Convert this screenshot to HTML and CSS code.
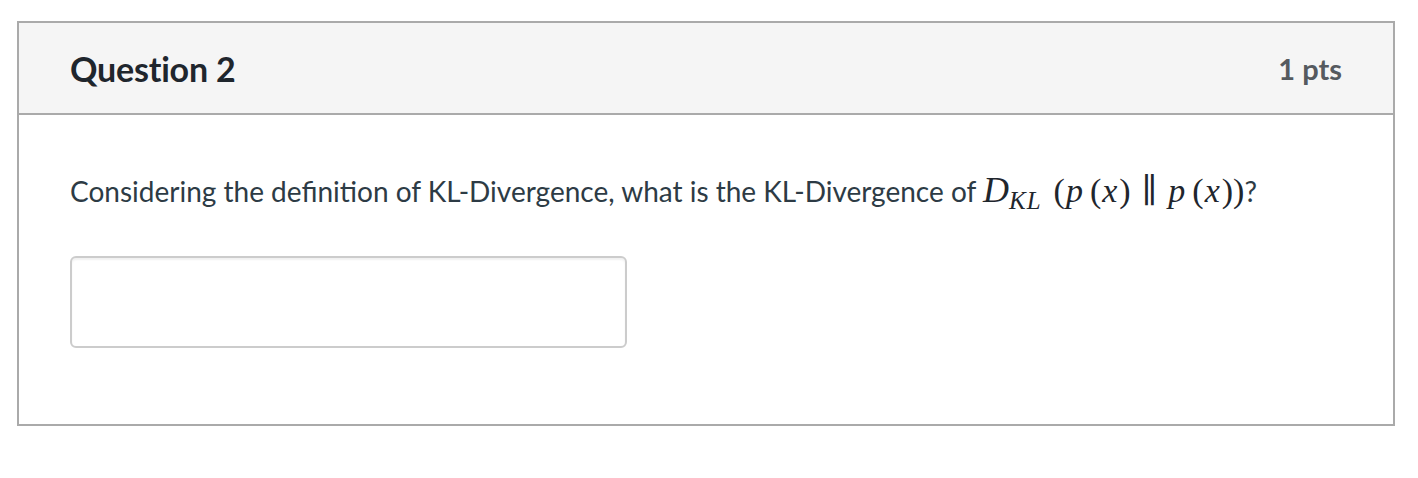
FILE: index.html
```html
<!DOCTYPE html>
<html>
<head>
<meta charset="utf-8">
<link rel="stylesheet" href="styles.css">
</head>
<body>
<div class="question">
  <div class="header">
    <span class="name">Question 2</span>
    <span class="pts">1 pts</span>
  </div>
  <div class="content">
    <p class="text">Considering the definition of KL-Divergence, what is the KL-Divergence of <span class="math"><span class="mi big">D</span><sub class="mi sub">KL</sub><span class="sp"></span><span class="mo">(</span><span class="mi">p</span><span class="sp2"></span><span class="mo">(</span><span class="mi">x</span><span class="mo">)</span><span class="sp"></span><span class="mo">∥</span><span class="sp"></span><span class="mi">p</span><span class="sp2"></span><span class="mo">(</span><span class="mi">x</span><span class="mo last">))</span></span>?</p>
    <div class="answer"></div>
  </div>
</div>
</body>
</html>
```
FILE: styles.css
```css
html, body { margin: 0; padding: 0; background: #fff; }
body { font-family: Lato, "Open Sans", sans-serif; color: #2d3b45; }
.question {
  margin: 21px 0 0 17px;
  width: 1378px;
  height: 405px;
  box-sizing: border-box;
  border: 2px solid #aaaaaa;
}
.header {
  height: 90px;
  background: #f5f5f5;
  border-bottom: 2px solid #aaaaaa;
  display: flex;
  align-items: center;
  justify-content: space-between;
  padding: 0 51px;
}
.name { font-weight: 700; font-size: 34px; color: #1f262d; letter-spacing: -0.2px; }
.pts { font-weight: 700; font-size: 29px; color: #555a5f; }
.content { padding: 0 51px; }
.text {
  margin: 0;
  padding-top: 56px;
  font-size: 28px;
  line-height: 40px;
  color: #2d3b45;
}
.math { font-family: "Liberation Serif", "DejaVu Serif", serif; font-size: 34px; line-height: 1; color: #1f262d; }
.mi { font-style: italic; margin-right: 2px; }
.big { font-size: 36px; margin-right: 0; }
.sub { font-size: 25px; vertical-align: -7px; line-height: 0; margin-left: 0; letter-spacing: 1px; }
.mo { font-style: normal; letter-spacing: 1px; }
.last { letter-spacing: 0; }
.sp { display: inline-block; width: 10px; }
.sp2 { display: inline-block; width: 5px; }
.answer {
  margin-top: 45px;
  width: 557px;
  height: 92px;
  box-sizing: border-box;
  border: 2px solid #cccccc;
  border-radius: 6px;
  box-shadow: inset 0 2px 2px rgba(0,0,0,0.06);
  background: #fff;
}
```
